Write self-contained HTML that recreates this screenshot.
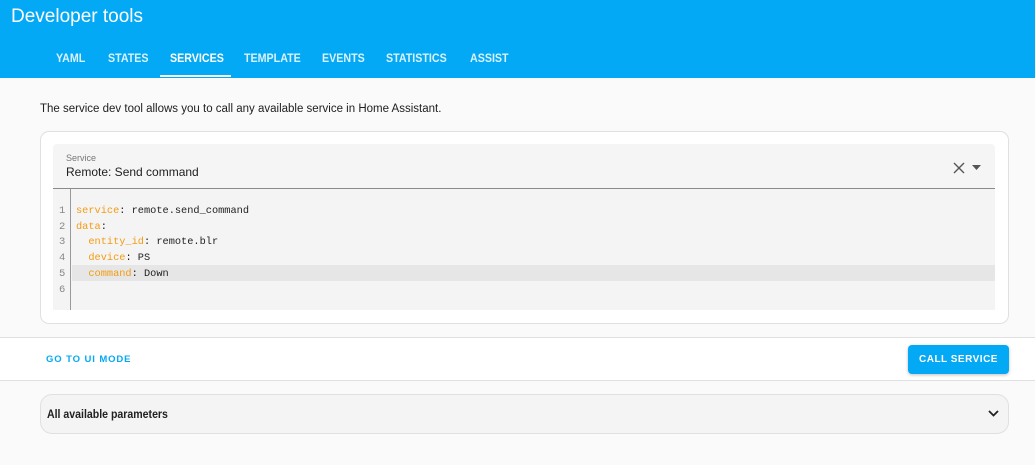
<!DOCTYPE html>
<html><head><style>
*{margin:0;padding:0;box-sizing:border-box}
body{width:1035px;height:465px;overflow:hidden;background:#fafafa;font-family:"Liberation Sans",sans-serif;color:#212121;position:relative}
.hdr{position:absolute;left:0;top:0;width:1035px;height:78px;background:#03a9f4}
.title{position:absolute;left:11px;top:6px;font-size:19px;color:#fff}
.tab{position:absolute;top:51px;font-size:12px;font-weight:bold;color:rgba(255,255,255,.85);transform:scaleX(.89);transform-origin:0 0}
.ul{position:absolute;left:160px;top:75px;width:71px;height:2px;background:#fff}
.desc{position:absolute;left:40px;top:103px;font-size:11.5px}
.card{position:absolute;left:40px;top:131px;width:969px;height:193px;background:#fff;border:1px solid #e0e0e0;border-radius:9px}
.field{position:absolute;left:53px;top:144px;width:942px;height:45px;background:#f5f5f5;border-bottom:1px solid #8a8a8a;border-radius:4px 4px 0 0}
.lbl{position:absolute;left:13px;top:9px;font-size:9px;color:#777}
.val{position:absolute;left:13px;top:21px;font-size:12px}
.code{position:absolute;left:53px;top:189px;width:942px;height:121px;background:#f4f4f4}
.gut{position:absolute;left:0;top:0;width:18px;height:121px;border-right:1px solid #999}
.hl{position:absolute;left:19px;top:76px;width:923px;height:16px;background:#e6e6e6}
.ln{position:absolute;font-family:"Liberation Mono",monospace;font-size:10.3px;white-space:pre;line-height:15.7px}
.k{color:#f49b10}
.bar{position:absolute;left:0;top:337px;width:1035px;height:44px;background:#fff;border-top:1px solid #e0e0e0;border-bottom:1px solid #e0e0e0}
.go{position:absolute;left:46px;top:16px;font-size:9.5px;font-weight:bold;letter-spacing:0.9px;color:#03a9f4}
.btn{position:absolute;left:908px;top:7px;width:101px;height:29px;background:#03a9f4;border-radius:4px;color:#fff;font-size:10px;font-weight:bold;letter-spacing:0.5px;text-align:center;line-height:29px;box-shadow:0 1px 3px rgba(0,0,0,.25)}
.exp{position:absolute;left:40px;top:394px;width:969px;height:40px;background:#f4f4f4;border:1px solid #e0e0e0;border-radius:12px}
.exp span{position:absolute;left:6px;top:12px;font-size:12px;font-weight:bold;color:#212121;transform:scaleX(.88);transform-origin:0 0}
</style></head><body>
<div class="hdr">
<div class="title">Developer tools</div>
<div class="tab" style="left:56px">YAML</div>
<div class="tab" style="left:108px">STATES</div>
<div class="tab" style="left:170px;color:#fff">SERVICES</div>
<div class="tab" style="left:244px">TEMPLATE</div>
<div class="tab" style="left:322px">EVENTS</div>
<div class="tab" style="left:386px">STATISTICS</div>
<div class="tab" style="left:470px">ASSIST</div>
<div class="ul"></div>
</div>
<div class="desc">The service dev tool allows you to call any available service in Home Assistant.</div>
<div class="card"></div>
<div class="field"><div class="lbl">Service</div><div class="val">Remote: Send command</div>
<svg style="position:absolute;left:900px;top:18px" width="12" height="12" viewBox="0 0 12 12"><path d="M1 1L11 11M11 1L1 11" stroke="#555" stroke-width="1.4"/></svg>
<svg style="position:absolute;left:919px;top:21px" width="9" height="5" viewBox="0 0 9 5"><path d="M0 0H9L4.5 5Z" fill="#555"/></svg>
</div>
<div class="code"><div class="gut"></div><div class="hl"></div>
<div class="ln" style="left:6px;top:15px;color:#888;font-size:10.5px">1
2
3
4
5
6</div>
<div class="ln" style="left:23px;top:15px"><span class="k">service</span>: remote.send_command
<span class="k">data</span>:
  <span class="k">entity_id</span>: remote.blr
  <span class="k">device</span>: PS
  <span class="k">command</span>: Down
</div>
</div>
<div class="bar"><div class="go">GO TO UI MODE</div><div class="btn">CALL SERVICE</div></div>
<div class="exp"><span>All available parameters</span>
<svg style="position:absolute;left:947px;top:15px" width="11" height="7" viewBox="0 0 11 7"><path d="M1 1L5.5 5.5L10 1" stroke="#222" stroke-width="1.8" fill="none"/></svg></div>
</body></html>
